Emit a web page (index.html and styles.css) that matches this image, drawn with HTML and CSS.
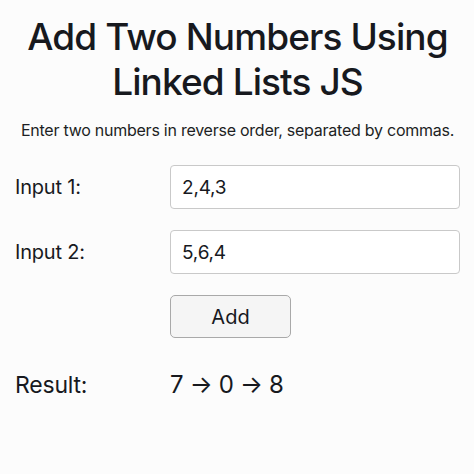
FILE: index.html
```html
<!DOCTYPE html>
<html>
<head>
<meta charset="utf-8">
<link rel="stylesheet" href="styles.css">
</head>
<body>
<main class="page">
  <h1 class="title">Add Two Numbers Using<br>Linked Lists JS</h1>
  <p class="subtitle">Enter two numbers in reverse order, separated by commas.</p>
  <div class="form">
    <label class="label" for="in1">Input 1:</label>
    <input class="field" id="in1" type="text" value="2,4,3">
    <label class="label" for="in2">Input 2:</label>
    <input class="field" id="in2" type="text" value="5,6,4">
    <span></span>
    <button class="btn" type="button">Add</button>
    <span class="label result-label">Result:</span>
    <span class="result">7 → 0 → 8</span>
  </div>
</main>
</body>
</html>
```
FILE: styles.css
```css
html, body {
  margin: 0;
  padding: 0;
  background: #fcfcfc;
}
body {
  font-family: Inter, "Noto Sans", sans-serif;
  color: #17191e;
}
.page {
  padding: 14px 14px 0 15px;
}
.title {
  margin: 0 -10px;
  text-align: center;
  font-size: 37px;
  line-height: 45px;
  font-weight: 500;
  letter-spacing: -0.9px;
  white-space: nowrap;
}
.subtitle {
  margin: 16px -10px 0;
  text-align: center;
  font-size: 16px;
  line-height: 20px;
  letter-spacing: -0.25px;
  white-space: nowrap;
  color: #1d1f24;
}
.form {
  margin-top: 25px;
  display: grid;
  grid-template-columns: 155px 290px;
  row-gap: 21px;
  align-items: center;
}
.label {
  font-size: 20px;
  letter-spacing: -0.2px;
}
.field {
  box-sizing: border-box;
  width: 290px;
  height: 44px;
  border: 1px solid #c9c9c9;
  border-radius: 4px;
  background: #fff;
  padding: 0 11px;
  font-family: inherit;
  font-size: 19px;
  letter-spacing: -0.2px;
  color: #17191e;
  outline: none;
}
.btn {
  box-sizing: border-box;
  width: 121px;
  height: 43px;
  border: 1px solid #a9a9a9;
  border-radius: 5px;
  background: #f5f5f5;
  font-family: inherit;
  font-size: 20px;
  color: #17191e;
  padding: 0;
}
.result-label, .result {
  margin-top: 11px;
}
.result-label {
  font-size: 23px;
}
.result {
  font-size: 24px;
  letter-spacing: -0.3px;
}
```
